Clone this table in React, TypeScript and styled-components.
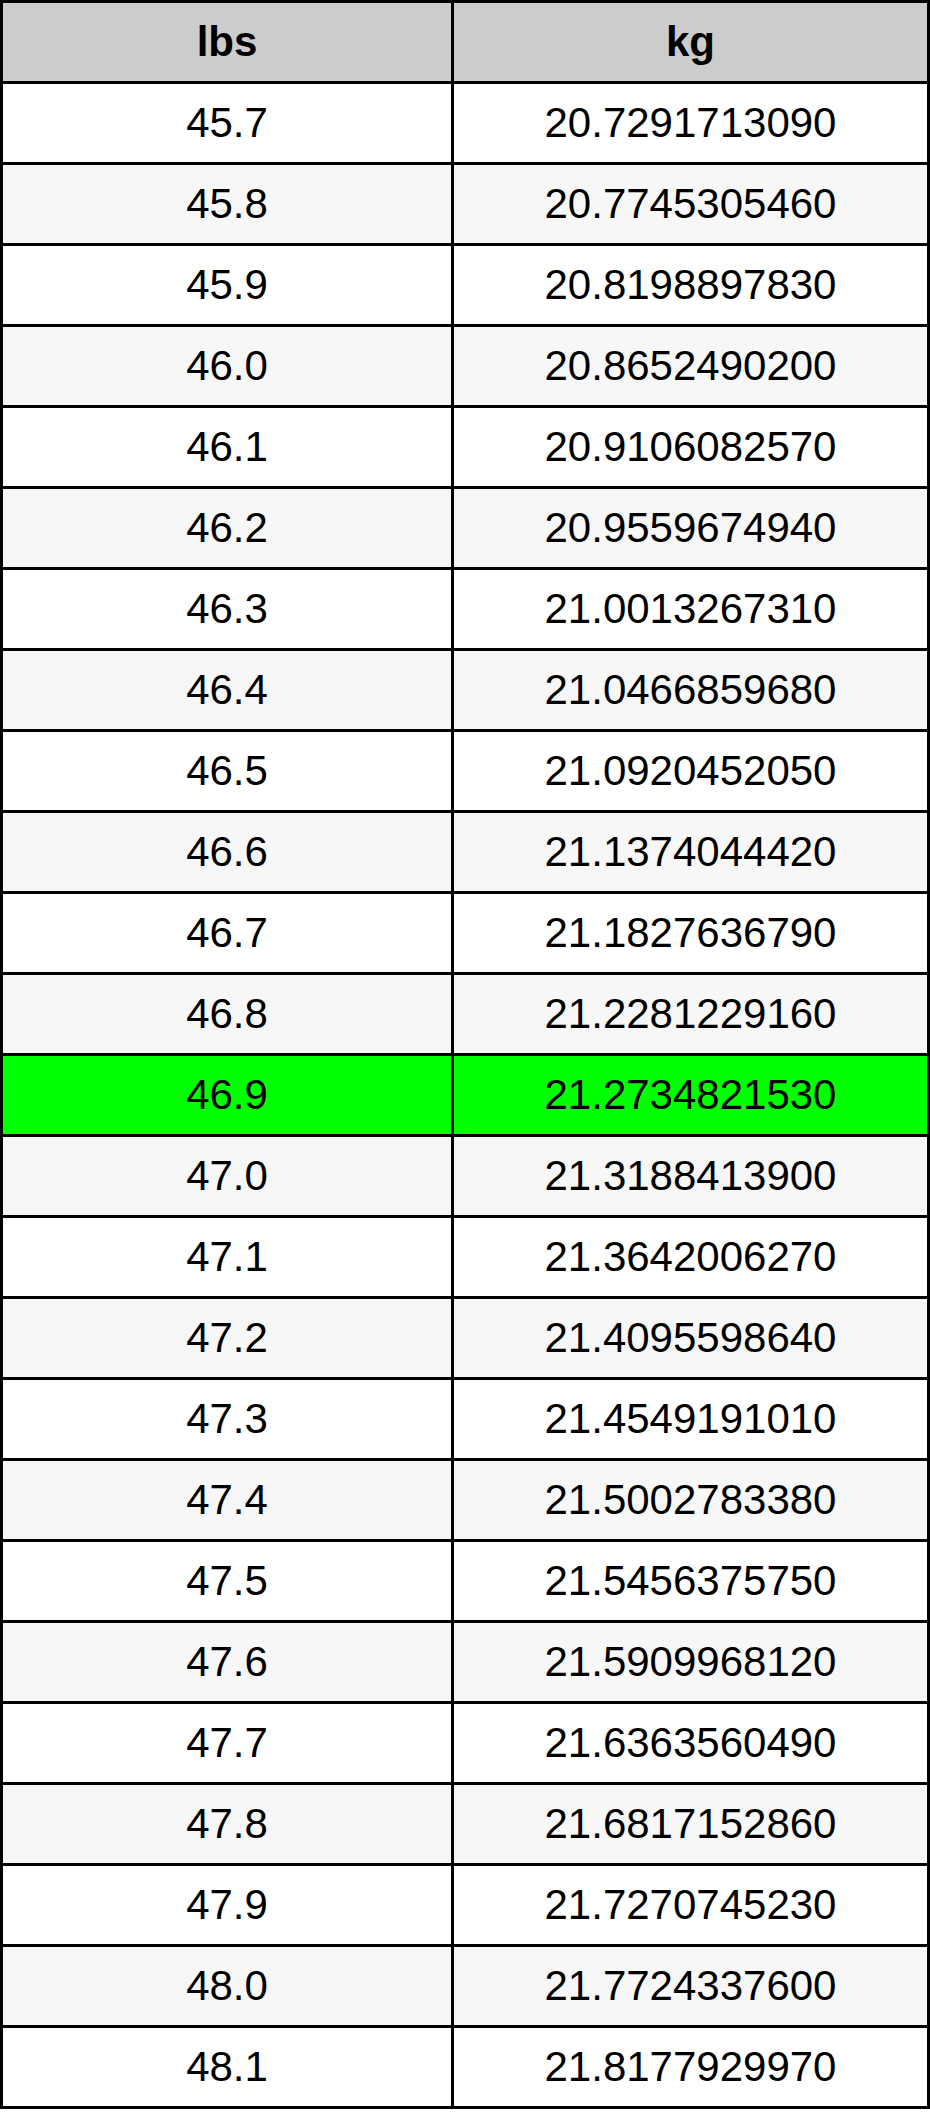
import React from "react";
import styled, { createGlobalStyle } from "styled-components";

const Global = createGlobalStyle`
  html, body { margin: 0; padding: 0; background: #ffffff; }
  body { font-family: "Liberation Sans", Arial, sans-serif; }
`;

const Table = styled.div`
  display: grid;
  grid-template-columns: 448px 473px;
  grid-auto-rows: 78px;
  gap: 3px;
  padding: 3px;
  width: 930px;
  box-sizing: border-box;
  background: #000000;
`;

const Cell = styled.div<{ $bg: string; $bold?: boolean }>`
  display: flex;
  align-items: center;
  justify-content: center;
  background: ${(p) => p.$bg};
  color: #000000;
  font-size: 42px;
  font-weight: ${(p) => (p.$bold ? 700 : 400)};
`;

const rows: [string, string][] = [
  ["45.7", "20.7291713090"],
  ["45.8", "20.7745305460"],
  ["45.9", "20.8198897830"],
  ["46.0", "20.8652490200"],
  ["46.1", "20.9106082570"],
  ["46.2", "20.9559674940"],
  ["46.3", "21.0013267310"],
  ["46.4", "21.0466859680"],
  ["46.5", "21.0920452050"],
  ["46.6", "21.1374044420"],
  ["46.7", "21.1827636790"],
  ["46.8", "21.2281229160"],
  ["46.9", "21.2734821530"],
  ["47.0", "21.3188413900"],
  ["47.1", "21.3642006270"],
  ["47.2", "21.4095598640"],
  ["47.3", "21.4549191010"],
  ["47.4", "21.5002783380"],
  ["47.5", "21.5456375750"],
  ["47.6", "21.5909968120"],
  ["47.7", "21.6363560490"],
  ["47.8", "21.6817152860"],
  ["47.9", "21.7270745230"],
  ["48.0", "21.7724337600"],
  ["48.1", "21.8177929970"],
];

export default function App() {
  return (
    <>
      <Global />
      <Table>
        <Cell $bg="#cccccc" $bold>lbs</Cell>
        <Cell $bg="#cccccc" $bold>kg</Cell>
        {rows.map(([a, b], i) => {
          const bg = a === "46.9" ? "#00ff00" : i % 2 === 1 ? "#f7f7f7" : "#ffffff";
          return (
            <React.Fragment key={a}>
              <Cell $bg={bg}>{a}</Cell>
              <Cell $bg={bg}>{b}</Cell>
            </React.Fragment>
          );
        })}
      </Table>
    </>
  );
}
